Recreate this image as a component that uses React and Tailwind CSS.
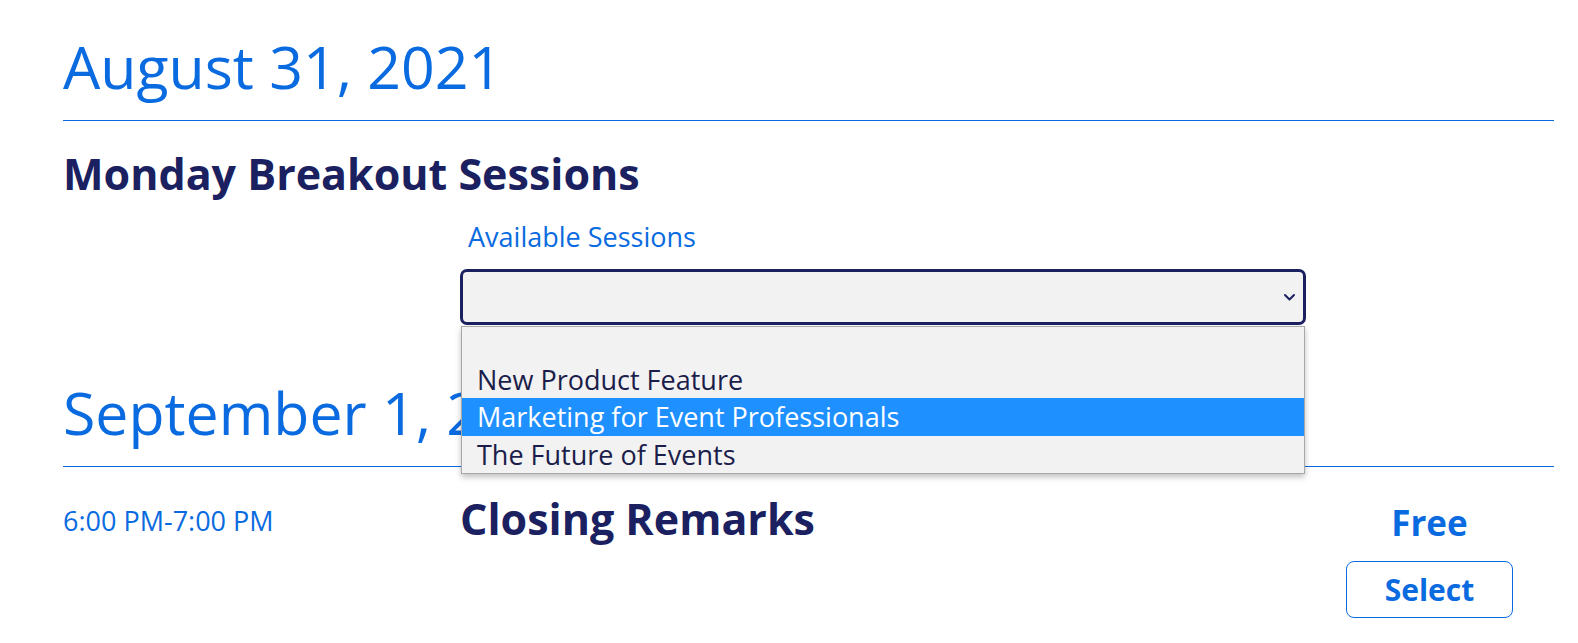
import React from "react";

export default function App() {
  return (
    <div className="min-h-screen bg-white pl-[63px] pr-[24px] pt-[32px] font-['Open_Sans',sans-serif]">
      <h1 className="text-[59px] leading-[68px] text-[#0a6be0] font-normal">August 31, 2021</h1>
      <div className="mt-[20px] border-t border-[#0a6be0]"></div>
      <h2 className="mt-[28px] text-[43px] leading-[50px] font-bold text-[#1b2160]">Monday Breakout Sessions</h2>
      <div className="ml-[397px] w-[846px] mt-[20px]">
        <div className="pl-[8px] text-[27px] leading-[36px] text-[#0a6be0]">Available Sessions</div>
        <div className="relative mt-[14px]">
          <div className="h-[56px] rounded-[7px] border-[3px] border-[#1b2160] bg-[#f2f2f2] flex items-center justify-end pr-[7px]">
            <svg width="13" height="8" viewBox="0 0 13 8" fill="none" stroke="#1b2160" strokeWidth="2" strokeLinecap="round" strokeLinejoin="round">
              <path d="M2 2l4.5 4.5L11 2" />
            </svg>
          </div>
          <div className="absolute left-[1px] right-[1px] top-[57px] z-10 bg-[#f2f2f2] border border-[#a8a8a8] shadow-[0_3px_6px_rgba(0,0,0,0.25)] text-[27px] text-[#1b1d4a]">
            <div className="h-[34px]"></div>
            <div className="h-[37px] leading-[37px] pl-[15px]">New Product Feature</div>
            <div className="h-[38px] leading-[38px] pl-[15px] bg-[#1e90ff] text-white">Marketing for Event Professionals</div>
            <div className="h-[37px] leading-[37px] pl-[15px]">The Future of Events</div>
          </div>
        </div>
      </div>
      <h1 className="mt-[53px] text-[59px] leading-[68px] text-[#0a6be0] font-normal">September 1, 2021</h1>
      <div className="mt-[20px] border-t border-[#0a6be0]"></div>
      <div className="flex mt-[26px]">
        <div className="w-[397px] shrink-0 text-[27px] leading-[36px] text-[#0a6be0] pt-[10px]">6:00 PM-7:00 PM</div>
        <div className="flex-1 text-[43px] leading-[52px] font-bold text-[#1b2160]">Closing Remarks</div>
        <div className="w-[167px] mr-[41px] flex flex-col items-center">
          <div className="text-[35px] leading-[44px] font-bold text-[#0a6be0] mt-[8px]">Free</div>
          <button className="mt-[16px] w-[167px] h-[57px] rounded-[8px] border border-[#0a6be0] text-[30px] leading-[40px] font-bold text-[#0a6be0] bg-white">Select</button>
        </div>
      </div>
    </div>
  );
}
